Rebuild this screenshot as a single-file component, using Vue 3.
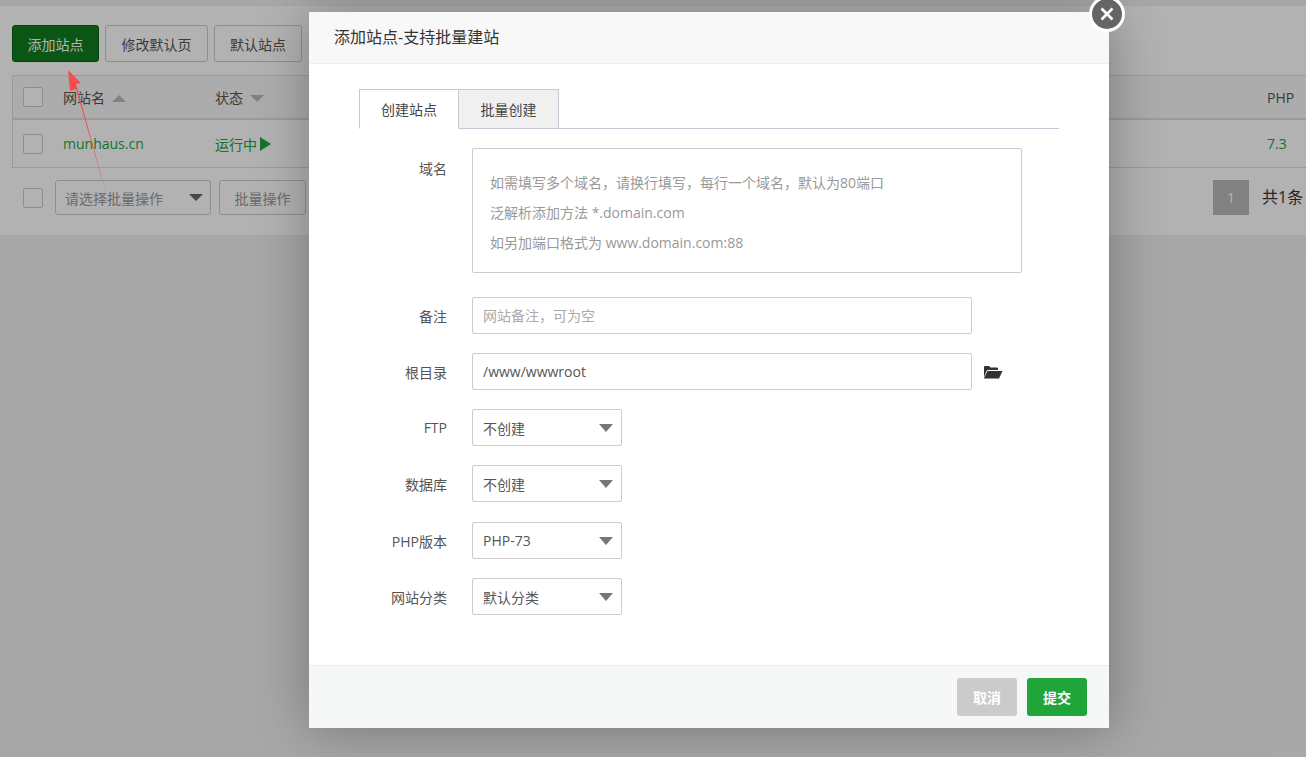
<template>
  <div class="page">
    <div class="site-card">
      <div class="toolbar">
        <button class="btn btn-green">添加站点</button>
        <button class="btn btn-plain w-modify">修改默认页</button>
        <button class="btn btn-plain w-default">默认站点</button>
      </div>
      <div class="table">
        <div class="tr th">
          <span class="check"></span>
          <span class="col-name">网站名<i class="tri up"></i></span>
          <span class="col-status">状态<i class="tri down"></i></span>
          <span class="col-php">PHP</span>
        </div>
        <div class="tr td">
          <span class="check"></span>
          <span class="col-name green">munhaus.cn</span>
          <span class="col-status green">运行中<i class="tri play"></i></span>
          <span class="col-php green">7.3</span>
        </div>
      </div>
      <div class="batch">
        <span class="check"></span>
        <div class="batch-select">请选择批量操作<i class="tri down dark"></i></div>
        <button class="batch-btn">批量操作</button>
        <div class="pager">
          <span class="page-cur">1</span>
          <span class="page-total">共1条</span>
        </div>
      </div>
    </div>

    <div class="shade"></div>

    <!-- 红色箭头，截图上后画的 -->
    <svg class="arrow" width="60" height="150" viewBox="0 0 60 150">
      <path d="M8 2 L21 15 L16 16 L48 132 L16 21 L10 23 Z" fill="#f94b4b" />
    </svg>

    <div class="modal">
      <div class="modal-title">添加站点-支持批量建站</div>
      <span class="modal-close">
        <svg width="16" height="16" viewBox="0 0 16 16">
          <path d="M2.5 2.5 L13.5 13.5 M13.5 2.5 L2.5 13.5" stroke="#fff" stroke-width="2.6" />
        </svg>
      </span>

      <div class="modal-body">
        <div class="tabs">
          <span class="tab on">创建站点</span>
          <span class="tab">批量创建</span>
        </div>

        <div class="row row-domain">
          <label>域名</label>
          <div class="domain-box">
            <p v-for="line in domainTips" :key="line">{{ line }}</p>
          </div>
        </div>

        <div class="row row-note">
          <label>备注</label>
          <div class="input placeholder">网站备注，可为空</div>
        </div>

        <div class="row row-path">
          <label>根目录</label>
          <div class="input">/www/wwwroot</div>
          <svg class="folder" width="20" height="16" viewBox="0 0 20 16">
            <path d="M1 13 V3 Q1 2 2 2 H6 L7.500 3.500 H14 Q15 3.500 15 4.500 V6 H5 Q4 6 3.500 7 Z" fill="#333" />
            <path d="M4.500 7 H19.500 L16 14.500 H0.800 Z" fill="#333" />
          </svg>
        </div>

        <div v-for="s in selects" :key="s.label" class="row" :class="s.cls">
          <label>{{ s.label }}</label>
          <div class="select">{{ s.value }}<i class="tri down sel"></i></div>
        </div>
      </div>

      <div class="modal-foot">
        <button class="foot-btn cancel">取消</button>
        <button class="foot-btn submit">提交</button>
      </div>
    </div>
  </div>
</template>

<script setup>
const domainTips = [
  '如需填写多个域名，请换行填写，每行一个域名，默认为80端口',
  '泛解析添加方法 *.domain.com',
  '如另加端口格式为 www.domain.com:88'
]

const selects = [
  { label: 'FTP', value: '不创建', cls: 'row-ftp' },
  { label: '数据库', value: '不创建', cls: 'row-db' },
  { label: 'PHP版本', value: 'PHP-73', cls: 'row-php' },
  { label: '网站分类', value: '默认分类', cls: 'row-cat' }
]
</script>

<style>
html, body {
  margin: 0;
  overflow: hidden;
}
</style>

<style scoped>
.page {
  position: relative;
  width: 1306px;
  height: 757px;
  overflow: hidden;
  box-sizing: border-box;
  padding-top: 6px;
  background: #f0f0f0;
  font-family: "Open Sans", "Noto Sans CJK SC", sans-serif;
  font-size: 14px;
  color: #555;
}

.site-card {
  height: 229px;
  box-sizing: border-box;
  padding: 19px 0 0 12px;
  background: #fff;
}

.toolbar {
  display: flex;
  gap: 6px;
  height: 37px;
}

.btn {
  height: 37px;
  box-sizing: border-box;
  border-radius: 3px;
  font: inherit;
  padding: 0;
}

.btn-green {
  width: 87px;
  background: #107c1e;
  border: 1px solid #0c5e17;
  color: #fff;
  margin-right: 0;
}

.btn-plain {
  background: #fff;
  border: 1px solid #ccc;
  color: #555;
}

.w-modify { width: 103px; }
.w-default { width: 88px; }

.table {
  margin-top: 13px;
  border: 1px solid #ddd;
  border-right: 0;
}

.tr {
  display: flex;
  align-items: center;
  position: relative;
  padding-left: 10px;
}

.th {
  height: 42px;
  background: #f6f6f6;
  border-bottom: 2px solid #ddd;
}

.td {
  height: 47px;
}

.check {
  display: block;
  flex: none;
  width: 18px;
  height: 18px;
  border: 1px solid #ccc;
  border-radius: 2px;
  background: #fff;
}

.col-name {
  margin-left: 20px;
  width: 152px;
}

.col-status {
  flex: 1;
}

.col-php {
  width: 39px;
}

.green {
  color: #20a53a;
}

.tri {
  display: inline-block;
  width: 0;
  height: 0;
  border-left: 7px solid transparent;
  border-right: 7px solid transparent;
  vertical-align: 1px;
}

.tri.up {
  margin-left: 7px;
  border-bottom: 7px solid #bbb;
}

.tri.down {
  margin-left: 7px;
  border-top: 7px solid #bbb;
}

.tri.play {
  margin-left: 3px;
  border: 0;
  border-left: 11px solid #20a53a;
  border-top: 7px solid transparent;
  border-bottom: 7px solid transparent;
  vertical-align: -1px;
}

.batch {
  display: flex;
  align-items: center;
  margin-top: 12px;
  padding-left: 11px;
}

.batch-select {
  display: flex;
  align-items: center;
  justify-content: space-between;
  box-sizing: border-box;
  width: 156px;
  height: 35px;
  margin-left: 12px;
  padding: 0 7px 0 9px;
  border: 1px solid #ccc;
  border-radius: 3px;
  color: #999;
  background: #fff;
}

.tri.dark {
  border-top-color: #666;
}

.batch-btn {
  width: 87px;
  height: 35px;
  margin-left: 8px;
  box-sizing: border-box;
  background: #fff;
  border: 1px solid #ccc;
  border-radius: 3px;
  color: #999;
  font: inherit;
  padding: 0;
}

.pager {
  display: flex;
  margin-left: auto;
}

.page-cur {
  width: 36px;
  height: 35px;
  line-height: 35px;
  text-align: center;
  background: #b9b9b9;
  color: #fff;
}

.page-total {
  width: 57px;
  height: 35px;
  line-height: 35px;
  box-sizing: border-box;
  padding-left: 13px;
  font-size: 16px;
  color: #333;
  background: #fff;
  white-space: nowrap;
}

.shade {
  position: absolute;
  inset: 0;
  background: rgba(0, 0, 0, 0.3);
}

.arrow {
  position: absolute;
  left: 60px;
  top: 68px;
}

.modal {
  position: absolute;
  left: 309px;
  top: 12px;
  width: 800px;
  height: 716px;
  display: flex;
  flex-direction: column;
  background: #fff;
  box-shadow: 1px 1px 50px rgba(0, 0, 0, 0.3);
}

.modal-title {
  flex: none;
  height: 51px;
  line-height: 51px;
  padding-left: 25px;
  font-size: 16px;
  color: #333;
  background: #f8f8f8;
  border-bottom: 1px solid #eee;
}

.modal-close {
  position: absolute;
  left: 780px;
  top: -16px;
  width: 36px;
  height: 36px;
  box-sizing: border-box;
  display: flex;
  align-items: center;
  justify-content: center;
  border-radius: 50%;
  background: #656565;
  border: 3px solid #fff;
}

.modal-body {
  flex: 1;
  padding: 25px 50px 0;
}

.tabs {
  display: flex;
  height: 40px;
  box-sizing: border-box;
  border-bottom: 1px solid #c9c6d6;
}

.tab {
  width: 100px;
  height: 40px;
  box-sizing: border-box;
  line-height: 40px;
  text-align: center;
  color: #444;
  background: #f0f0f0;
  border: 1px solid #c9c6d6;
  border-left: 0;
}

.tab.on {
  width: 100px;
  background: #fff;
  border-left: 1px solid #c9c6d6;
  border-bottom-color: #fff;
}

.row {
  display: flex;
  align-items: center;
}

.row label {
  width: 88px;
  margin-right: 25px;
  text-align: right;
  color: #555;
}

.row-domain {
  align-items: flex-start;
  margin-top: 19px;
}

.row-domain label {
  margin-top: 10px;
}

.domain-box {
  box-sizing: border-box;
  width: 550px;
  height: 125px;
  padding: 19px 17px;
  border: 1px solid #ccc;
  border-radius: 2px;
  color: #999;
}

.domain-box p {
  margin: 0;
  line-height: 30px;
  white-space: nowrap;
}

.input {
  box-sizing: border-box;
  width: 500px;
  height: 37px;
  line-height: 35px;
  padding-left: 10px;
  border: 1px solid #ccc;
  border-radius: 2px;
  color: #555;
}

.placeholder {
  color: #aaa;
}

.folder {
  margin-left: 11px;
}

.select {
  display: flex;
  align-items: center;
  justify-content: space-between;
  box-sizing: border-box;
  width: 150px;
  height: 37px;
  padding: 0 8px 0 10px;
  border: 1px solid #ccc;
  border-radius: 2px;
  color: #555;
}

.tri.sel {
  border-top-color: #777;
  border-top-width: 8px;
}

.row-note { margin-top: 24px; }
.row-path { margin-top: 19px; }
.row-ftp { margin-top: 19px; }
.row-db { margin-top: 19px; }
.row-php { margin-top: 20px; }
.row-cat { margin-top: 19px; }

.modal-foot {
  flex: none;
  height: 62px;
  display: flex;
  align-items: center;
  justify-content: flex-end;
  gap: 10px;
  padding-right: 22px;
  background: #f6f8f8;
  border-top: 1px solid #eee;
}

.foot-btn {
  width: 60px;
  height: 38px;
  border: 0;
  border-radius: 3px;
  color: #fff;
  font: inherit;
  font-weight: 700;
  padding: 0;
}

.cancel { background: #cbcbcb; }
.submit { background: #20a53a; }
</style>
